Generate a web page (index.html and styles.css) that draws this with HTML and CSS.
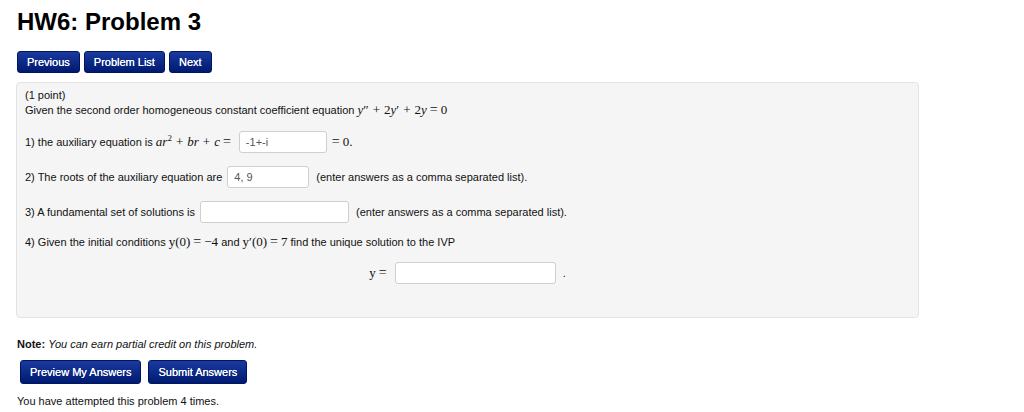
FILE: index.html
```html
<!DOCTYPE html>
<html>
<head>
<meta charset="utf-8">
<title>HW6: Problem 3</title>
<link rel="stylesheet" href="styles.css">
</head>
<body>
<div class="page">
  <h1 class="title">HW6: Problem 3</h1>
  <div class="nav">
    <span class="btn">Previous</span>
    <span class="btn">Problem List</span>
    <span class="btn">Next</span>
  </div>
  <div class="problem">
    <div class="line">(1 point)</div>
    <div class="line">Given the second order homogeneous constant coefficient equation <span class="m"><i>y</i>″<span class="op">+</span>2<i>y</i>′<span class="op">+</span>2<i>y</i><span class="eq">=</span>0</span></div>
    <div class="row">
      <span>1) the auxiliary equation is <span class="m"><i>ar</i><sup>2</sup><span class="op">+</span><i>br</i><span class="op">+</span><i>c</i><span class="eq">=</span></span></span>
      <span class="input w1">-1+-i</span>
      <span class="m"><span class="eq first">=</span>0.</span>
    </div>
    <div class="row">
      <span>2) The roots of the auxiliary equation are</span>
      <span class="input w2">4, 9</span>
      <span class="after">(enter answers as a comma separated list).</span>
    </div>
    <div class="row">
      <span>3) A fundamental set of solutions is</span>
      <span class="input w3"></span>
      <span class="after">(enter answers as a comma separated list).</span>
    </div>
    <div class="line q4">4) Given the initial conditions <span class="m">y(0)<span class="eq">=</span>−4</span> and <span class="m">y′(0)<span class="eq">=</span>7</span> find the unique solution to the IVP</div>
    <div class="row center">
      <span class="m">y<span class="eq">=</span></span>
      <span class="input w4"></span>
      <span class="dot">.</span>
    </div>
  </div>
  <p class="note"><b>Note:</b> <i>You can earn partial credit on this problem.</i></p>
  <div class="actions">
    <span class="btn big">Preview My Answers</span>
    <span class="btn big">Submit Answers</span>
  </div>
  <p class="attempts">You have attempted this problem 4 times.</p>
</div>
</body>
</html>
```
FILE: styles.css
```css
html, body {
  margin: 0;
  padding: 0;
  background: #fff;
}
body {
  font-family: "Liberation Sans", Arial, Helvetica, sans-serif;
  font-size: 11px;
  color: #111;
}
.page {
  padding: 8px 0 0 17px;
  width: 903px;
}
.title {
  margin: 0;
  font-size: 24px;
  line-height: 28px;
  font-weight: bold;
  color: #000;
}
.nav {
  display: flex;
  gap: 4px;
  margin-top: 15px;
}
.btn {
  display: inline-flex;
  align-items: center;
  height: 20px;
  padding: 0 9px;
  border: 1px solid #00155f;
  border-radius: 3px;
  background: linear-gradient(#1a3a9f, #001a70);
  color: #fff;
  font-size: 11px;
  line-height: 20px;
  white-space: nowrap;
  text-shadow: 0 0 0.4px #fff;
}
.btn.big {
  height: 22px;
}
.problem {
  margin: 9px 0 0 -1px;
  width: 885px;
  padding: 5px 8px 33px 8px;
  background: #f5f5f5;
  border: 1px solid #e3e3e3;
  border-radius: 4px;
}
.line {
  line-height: 15px;
}
.m {
  font-family: "Liberation Serif", "Times New Roman", serif;
  font-size: 13px;
  line-height: 1;
}
.m sup {
  font-size: 9px;
  line-height: 0;
  vertical-align: 5px;
}
.op {
  margin: 0 4px;
}
.eq {
  margin: 0 3px;
  font-size: 14px;
}
.eq.first {
  margin-left: 0;
}
.row {
  display: flex;
  align-items: center;
  gap: 5px;
  height: 22px;
  margin-top: 13px;
  line-height: 15px;
}
.input {
  box-sizing: border-box;
  height: 22px;
  padding: 0 6px;
  background: #fff;
  border: 1px solid #cfcfcf;
  border-radius: 3px;
  color: #555;
  line-height: 20px;
}
.w1 { width: 88px; }
.w2 { width: 82px; }
.w3 { width: 149px; }
.w4 { width: 161px; }
.after {
  margin-left: 2px;
}
.q4 {
  margin-top: 12px;
}
.center {
  justify-content: center;
  margin-top: 12px;
}
.dot {
  margin-left: 2px;
}
.note {
  margin: 19px 0 0 0;
  line-height: 15px;
}
.actions {
  display: flex;
  gap: 7px;
  margin: 8px 0 0 3px;
}
.attempts {
  margin: 10px 0 0 0;
  line-height: 15px;
}
```
